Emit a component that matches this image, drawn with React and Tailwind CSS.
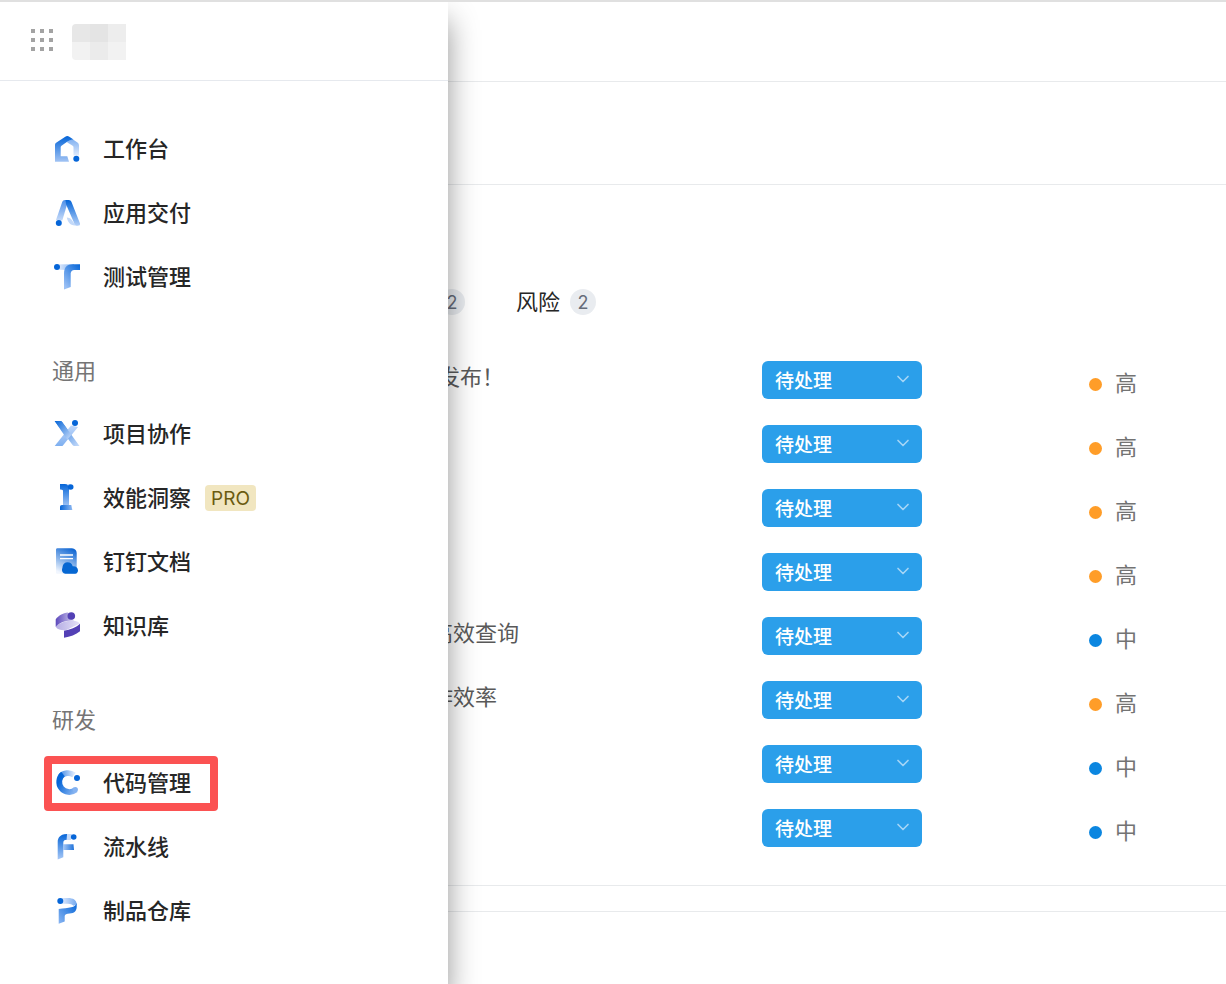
import { useId, useState } from 'react';
import { ChevronDown } from 'lucide-react';

const DARK = '#0565d8';
const LIGHT = '#b9d3f8';

function Gradient({ id, from = DARK, to = LIGHT, x1 = 0, y1 = 0, x2 = 0, y2 = 1 }) {
  return (
    <linearGradient id={id} x1={x1} y1={y1} x2={x2} y2={y2}>
      <stop offset="0%" stopColor={from} />
      <stop offset="100%" stopColor={to} />
    </linearGradient>
  );
}

function Icon({ children }) {
  const id = useId();
  return (
    <svg viewBox="0 0 28 28" className="h-7 w-7 shrink-0" fill="none" aria-hidden="true">
      {children(`${id}a`, `${id}b`)}
    </svg>
  );
}

function WorkbenchIcon() {
  return (
    <Icon>
      {(a, b) => (
        <>
          <defs>
            <Gradient id={a} to="#a3c4f4" />
            <Gradient id={b} from="#7fb0f1" to="#dfeafc" />
          </defs>
          <path d="M15.3 4 21 4.500 25.500 7.500Q27 8.500 27 10.500V20.500h-5.500V12.500c0-1-.4-1.500-1.200-2l-5-3Z" fill={`url(#${b})`} />
          <path d="M3 10.200c0-1.300.5-2 1.500-2.700L13.300 1.700Q15.300.5 17.300 1.700L21.500 4.500c-3 0-4.700 1-6.700 2.500L9.500 10.700c-.6.5-.8.900-.8 1.600v9h6.600L17 26.800H3Z" fill={`url(#${a})`} />
          <circle cx="24.300" cy="23.800" r="3" fill={DARK} />
        </>
      )}
    </Icon>
  );
}

function DeliveryIcon() {
  return (
    <Icon>
      {(a, b) => (
        <>
          <defs>
            <Gradient id={a} to="#b4d0f8" />
            <Gradient id={b} from="#4d8fe8" to="#c5daf9" />
          </defs>
          <path d="M14.800 18.500c4 .2 5.200 2.500 7.200 5.500l4 2.700c-6 .3-10-1.700-11.200-8.200Z" fill="#c3d9f9" />
          <path d="M4 21 10.200 3c.5-1.300 1.400-2 2.800-2h3.400L10.300 21.500Z" fill={`url(#${b})`} />
          <path d="M13.500 1h3.200c1.400 0 2.300.7 2.800 2L28 24.500c.3 1.300-.5 2.200-2 2.200-2 0-3.300-1-4-3L14 5.200Z" fill={`url(#${a})`} />
          <circle cx="6.800" cy="24" r="3" fill={DARK} />
        </>
      )}
    </Icon>
  );
}

function TestIcon() {
  return (
    <Icon>
      {(a, b) => (
        <>
          <defs>
            <Gradient id={a} x1={1} x2={0.2} to="#9cc1f5" />
            <Gradient id={b} x2={1} y2={0} from="#dce8fc" to="#78adf0" />
          </defs>
          <path d="M7 1.300h15v5.500H7Z" fill={`url(#${b})`} />
          <path d="M28 1.300h-7c-6 0-9 3.200-9 9v16.200l6.700-2.500V11.500C18.700 8.200 20 7 23 7h5Z" fill={`url(#${a})`} />
          <circle cx="5" cy="4" r="3" fill={DARK} />
        </>
      )}
    </Icon>
  );
}

function ProjectIcon() {
  return (
    <Icon>
      {(a, b) => (
        <>
          <defs>
            <Gradient id={a} x2={1} to="#c8dcfa" />
            <Gradient id={b} from="#bfd7fa" to="#7eaff0" />
          </defs>
          <path d="M2.700 1h5c1.300 0 2 .4 2.800 1.400L27.500 26h-4.300c-1.400 0-2.300-.5-3-1.500Z" fill={`url(#${a})`} />
          <path d="M19 5.500 26 7 10.500 26H2.700Z" fill={`url(#${b})`} />
          <path d="M2.700 1h5c1.300 0 2 .4 2.800 1.400l8.700 12-4 5Z" fill={`url(#${a})`} />
          <circle cx="23" cy="3.100" r="3" fill={DARK} />
        </>
      )}
    </Icon>
  );
}

function InsightIcon() {
  return (
    <Icon>
      {(a, b) => (
        <>
          <defs>
            <Gradient id={a} to="#9bc1f5" />
            <Gradient id={b} x2={1} y2={0} to="#8db8f2" />
          </defs>
          <path d="M11 .5h7v5h-7Z" fill="#8bb6f2" />
          <path d="M8 0h4.500C15.500 0 17 2 17 5v16.500h-6V6.500C10.500 5.500 9 5.500 8 5.500Z" fill={`url(#${a})`} />
          <path d="M10 21h9.300l1 5H8v-3c0-1.300.7-2 2-2Z" fill={`url(#${b})`} />
          <circle cx="18.700" cy="3" r="2.800" fill={DARK} />
        </>
      )}
    </Icon>
  );
}

function DocIcon() {
  return (
    <Icon>
      {(a) => (
        <>
          <defs>
            <Gradient id={a} x1={0.7} x2={0.3} from="#1268d3" to="#f1f6fe" />
          </defs>
          <path d="M5.500.3h14.500c3 .3 4.500 2 4.700 4.700v20.700H5.500c-1 0-1.500-.5-1.500-1.500V1.800c0-1 .5-1.500 1.500-1.500Z" fill={`url(#${a})`} />
          <path d="M8 7h13M8 10.700h13" stroke="#fff" strokeWidth="1.300" />
          <path d="M13.300 25.700c-2.300-.3-3.500-2-3.300-4.200.2-1.200.5-1.500.5-2.500.3-3 2.500-4.700 5-4.700 2.800 0 4.500 1.500 5.200 4 3.300-.3 5.300 1.500 5.300 4.200 0 2-1.300 3.200-3 3.200Z" fill="#0667d2" />
        </>
      )}
    </Icon>
  );
}

function KnowledgeIcon() {
  return (
    <Icon>
      {(a, b) => (
        <>
          <defs>
            <Gradient id={a} x2={1} y2={0} from="#5c48bb" to="#d6d1f1" />
            <Gradient id={b} x2={1} y2={0} from="#b5ade4" to="#e5e1f7" />
          </defs>
          <path d="M3.700 14C9 10.500 17 7.800 22 8.700c3 .4 5 1.600 5.800 2.800L14 18.300C8 18.300 4.200 17 3.700 14Z" fill={`url(#${b})`} />
          <path d="M3.700 7.500C6 4 11 1 16 .6L22 8.700C14 8 7 11 3.700 14.700Z" fill={`url(#${a})`} />
          <path d="M12 18.700c6-.9 12.500-3.300 16-6.900v7.500c-4 3.500-10 5.500-16 6.400Z" fill="#5340b5" />
          <circle cx="19.300" cy="4" r="3.800" fill="#5340b5" />
        </>
      )}
    </Icon>
  );
}

function CodeIcon() {
  return (
    <Icon>
      {(a, b) => (
        <>
          <defs>
            <Gradient id={a} x1={0} x2={1} y1={0.4} y2={1} to="#8db8f2" />
            <Gradient id={b} x2={1} y2={0} from="#4a90e8" to="#dbe8fc" />
          </defs>
          <path d="M8.500 7.500A10 10 0 0 1 22 6" stroke={`url(#${b})`} strokeWidth="5.800" />
          <path d="M11 5A10 10 0 1 0 23.700 20.800" stroke={`url(#${a})`} strokeWidth="5.800" />
          <circle cx="23.300" cy="20.600" r="2.600" fill="#84b2f1" />
          <circle cx="25" cy="9" r="3" fill={DARK} />
        </>
      )}
    </Icon>
  );
}

function PipelineIcon() {
  return (
    <Icon>
      {(a, b) => (
        <>
          <defs>
            <Gradient id={a} to="#a8c8f6" />
            <Gradient id={b} x2={1} y2={0} from="#a6c8f6" to="#1f72da" />
          </defs>
          <path d="M12 1h8l-1 6h-7Z" fill="#c5daf9" />
          <path d="M11.300 11.300h10.200l.5 5.700H11.300Z" fill={`url(#${b})`} />
          <path d="M15 1c-6 0-9.300 3-9.300 8v17.500l5.600-2.200V10c0-2.300 1-3.200 3.300-3.200Z" fill={`url(#${a})`} />
          <circle cx="21.700" cy="4" r="2.800" fill={DARK} />
        </>
      )}
    </Icon>
  );
}

function PackageIcon() {
  return (
    <Icon>
      {(a, b) => (
        <>
          <defs>
            <Gradient id={a} x1={1} x2={0} to="#8ab6f2" />
            <Gradient id={b} x2={1} y2={0} from="#dce8fc" to="#74a9ef" />
          </defs>
          <path d="M10 1h6c5 0 8.700 2 8.700 6.500l-3.200 1.200C20 7 17 6.700 10 6.700Z" fill={`url(#${b})`} />
          <path d="M24.700 5.700v4c0 4.300-2.500 6.500-7 6.800-3 .3-5 1-5 2.500v5.500l-6 2.200V12c5-.8 9-1 12.500-1.800 3-.7 5-1.700 5.500-4.500Z" fill={`url(#${a})`} />
          <circle cx="8.300" cy="4" r="3" fill={DARK} />
        </>
      )}
    </Icon>
  );
}

const groups = [
  {
    items: [
      { name: '工作台', icon: WorkbenchIcon },
      { name: '应用交付', icon: DeliveryIcon },
      { name: '测试管理', icon: TestIcon },
    ],
  },
  {
    title: '通用',
    items: [
      { name: '项目协作', icon: ProjectIcon },
      { name: '效能洞察', icon: InsightIcon, tag: 'PRO' },
      { name: '钉钉文档', icon: DocIcon },
      { name: '知识库', icon: KnowledgeIcon },
    ],
  },
  {
    title: '研发',
    items: [
      { name: '代码管理', icon: CodeIcon, highlight: true },
      { name: '流水线', icon: PipelineIcon },
      { name: '制品仓库', icon: PackageIcon },
    ],
  },
];

const tasks = [
  { id: 1, title: '发布！', indent: true, level: '高' },
  { id: 2, title: '', level: '高' },
  { id: 3, title: '', level: '高' },
  { id: 4, title: '', level: '高' },
  { id: 5, title: '高效查询', level: '中' },
  { id: 6, title: '作效率', level: '高' },
  { id: 7, title: '', level: '中' },
  { id: 8, title: '', level: '中' },
];

function AppGridIcon() {
  return (
    <svg viewBox="0 0 22 22" className="h-[22px] w-[22px]" fill="#a3a3a3" aria-hidden="true">
      {[0, 9, 18].map((y) => [0, 9, 18].map((x) => <rect key={`${x}-${y}`} x={x} y={y} width="4" height="4" />))}
    </svg>
  );
}

function NavItem({ item }) {
  const ItemIcon = item.icon;
  return (
    <li className="relative">
      <a href="#" className="flex h-16 items-center gap-[23px] text-[22px] font-medium text-[#262626]">
        <ItemIcon />
        <span className="pb-1">{item.name}</span>
        {item.tag && (
          <span className="-ml-[9px] flex h-[26px] items-center rounded bg-[#f1e6c0] px-[6px] pt-[2px] font-[Inter,sans-serif] text-[19px] font-normal text-[#6b5b10]">
            {item.tag}
          </span>
        )}
      </a>
      {item.highlight && (
        <span className="pointer-events-none absolute top-[5px] -left-2 h-[55px] w-[174px] rounded border-8 border-[#fb5252]" />
      )}
    </li>
  );
}

function Drawer() {
  return (
    <aside className="relative z-10 w-[448px] shrink-0 bg-white shadow-[0_18px_28px_rgba(0,0,0,0.42)]">
      <header className="flex h-[79px] items-start gap-[19px] border-b border-[#e6e9ee] pt-[22px] pl-[31px]">
        <button type="button" aria-label="应用" className="mt-[5px]">
          <AppGridIcon />
        </button>
        <div className="grid grid-cols-3 overflow-hidden rounded-l">
          <span className="h-[18px] w-[18px] bg-[#e7e7e7]" />
          <span className="h-[18px] w-[18px] bg-[#e4e4e4]" />
          <span className="h-[18px] w-[18px] bg-[#ededed]" />
          <span className="h-[18px] w-[18px] bg-[#f2f2f2]" />
          <span className="h-[18px] w-[18px] bg-[#ebebeb]" />
          <span className="h-[18px] w-[18px] bg-[#f2f2f2]" />
        </div>
      </header>
      <nav className="pt-9 pl-[52px]">
        {groups.map((group, idx) => (
          <section key={idx}>
            {group.title && (
              <h2 className="mt-[46px] mb-[15px] pb-1 text-[22px] leading-7 text-[#757575]">{group.title}</h2>
            )}
            <ul>
              {group.items.map((item) => (
                <NavItem key={item.name} item={item} />
              ))}
            </ul>
          </section>
        ))}
      </nav>
    </aside>
  );
}

function Count({ value }) {
  return (
    <span className="flex h-[26px] w-[26px] items-center justify-center rounded-full bg-[#e9ecf0] font-[Inter,sans-serif] text-[18px] text-[#666c7a]">
      {value}
    </span>
  );
}

function StatusSelect() {
  const [status, setStatus] = useState('todo');
  return (
    <div className="relative w-40">
      <select
        aria-label="状态"
        value={status}
        onChange={(e) => setStatus(e.target.value)}
        className="block h-[38px] w-full appearance-none rounded-md bg-[#2b9fea] pl-[13px] text-[19px] font-medium text-white"
      >
        <option value="todo">待处理</option>
      </select>
      <ChevronDown
        className="pointer-events-none absolute top-[8px] right-[9px] h-5 w-5 text-[#a5d5f6]"
        strokeWidth={2}
      />
    </div>
  );
}

function TaskTable() {
  return (
    <table className="w-full table-fixed text-[22px]">
      <colgroup>
        <col />
        <col className="w-[327px]" />
        <col className="w-[137px]" />
      </colgroup>
      <tbody>
        {tasks.map((task) => (
          <tr key={task.id} className="h-16">
            <td className={task.indent ? 'pb-[10px] pl-[7px] text-[#595959]' : 'pb-[10px] text-[#595959]'}>
              {task.title}
            </td>
            <td>
              <StatusSelect />
            </td>
            <td className="pt-2">
              <div className="flex items-center gap-[13px] text-[#737373]">
                <span
                  className={
                    task.level === '高'
                      ? 'h-[13px] w-[13px] rounded-full bg-[#ff9d28]'
                      : 'h-[13px] w-[13px] rounded-full bg-[#0b86e0]'
                  }
                />
                <span className="pb-[6px]">{task.level}</span>
              </div>
            </td>
          </tr>
        ))}
      </tbody>
    </table>
  );
}

export default function App() {
  return (
    <div className="flex min-h-screen flex-col overflow-hidden bg-white font-['Noto_Sans_CJK_SC',sans-serif]">
      <div className="relative z-20 h-[2px] bg-[#e0e0e0]" />
      <div className="flex flex-1">
        <Drawer />
        {/* the page slides under the open drawer */}
        <main className="-ml-[17px] min-w-0 flex-1">
          <div className="h-20 border-b border-[#e8eaec]" />
          <div className="h-[103px] border-b border-[#e8eaec]" />
          <div className="border-b border-[#e8eaec] pt-[104px] pb-[25px]">
            <div className="mb-[33px] flex h-[26px] items-center gap-[51px] pl-2 text-[22px] text-[#262626]">
              <button type="button">
                <Count value={2} />
              </button>
              <button type="button" className="flex items-center gap-[10px]">
                <span className="pb-1">风险</span>
                <Count value={2} />
              </button>
            </div>
            <TaskTable />
          </div>
          <div className="h-[26px] border-b border-[#e8eaec]" />
        </main>
      </div>
    </div>
  );
}
